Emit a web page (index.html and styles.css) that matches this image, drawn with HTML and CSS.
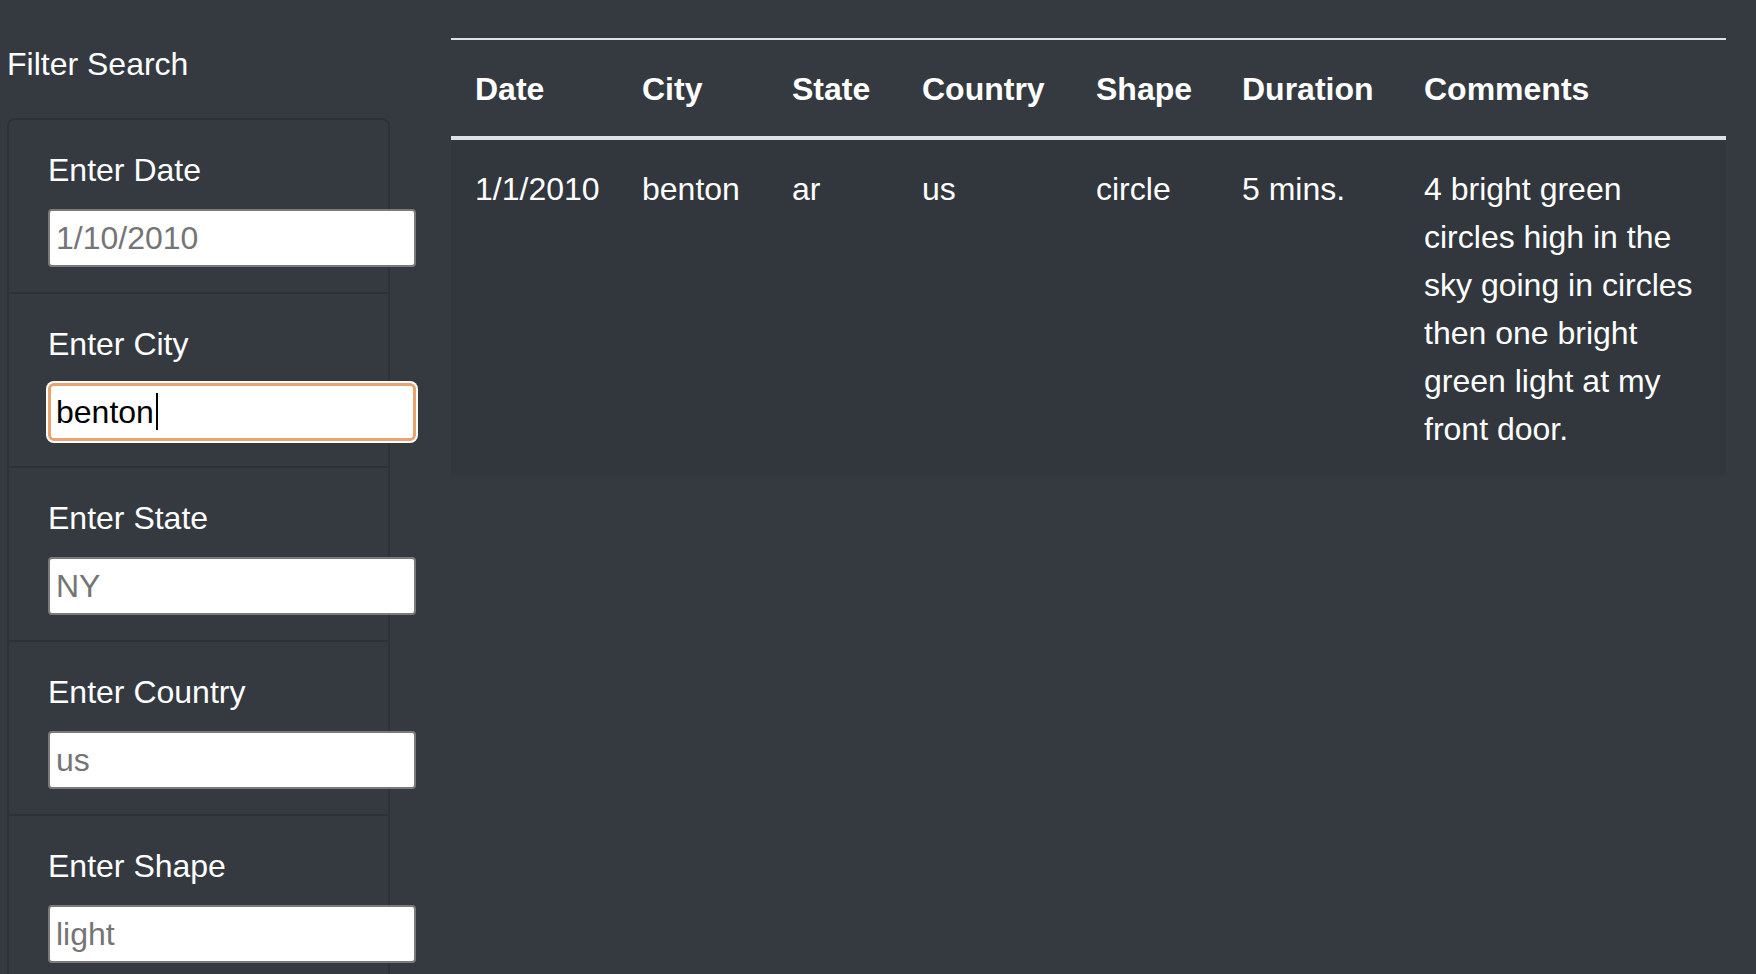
FILE: index.html
```html
<!DOCTYPE html>
<html lang="en">
<head>
<meta charset="utf-8">
<title>UFO Sightings</title>
<link rel="stylesheet" href="styles.css">
</head>
<body>
<div class="page">
  <aside class="sidebar">
    <h4 class="sidebar-title">Filter Search</h4>
    <ul class="filter-card">
      <li class="filter-item">
        <label class="filter-label" for="datetime">Enter Date</label>
        <div class="field"><input class="filter-input" id="datetime" type="text" placeholder="1/10/2010"></div>
      </li>
      <li class="filter-item">
        <label class="filter-label" for="city">Enter City</label>
        <div class="field"><input class="filter-input is-focused" id="city" type="text" value="benton"><span class="caret"></span></div>
      </li>
      <li class="filter-item">
        <label class="filter-label" for="state">Enter State</label>
        <div class="field"><input class="filter-input" id="state" type="text" placeholder="NY"></div>
      </li>
      <li class="filter-item">
        <label class="filter-label" for="country">Enter Country</label>
        <div class="field"><input class="filter-input" id="country" type="text" placeholder="us"></div>
      </li>
      <li class="filter-item">
        <label class="filter-label" for="shape">Enter Shape</label>
        <div class="field"><input class="filter-input" id="shape" type="text" placeholder="light"></div>
      </li>
    </ul>
  </aside>
  <main class="content">
    <table class="ufo-table">
      <colgroup>
        <col class="c-date"><col class="c-city"><col class="c-state"><col class="c-country"><col class="c-shape"><col class="c-duration"><col class="c-comments">
      </colgroup>
      <thead>
        <tr>
          <th>Date</th><th>City</th><th>State</th><th>Country</th><th>Shape</th><th>Duration</th><th>Comments</th>
        </tr>
      </thead>
      <tbody>
        <tr>
          <td>1/1/2010</td><td>benton</td><td>ar</td><td>us</td><td>circle</td><td>5 mins.</td><td>4 bright green circles high in the sky going in circles then one bright green light at my front door.</td>
        </tr>
      </tbody>
    </table>
  </main>
</div>
</body>
</html>
```

FILE: styles.css
```css
html, body {
  margin: 0;
  padding: 0;
  height: 100%;
  overflow: hidden;
  background: #343a40;
}

body {
  font-family: "Liberation Sans", Arial, sans-serif;
  font-size: 32px;
  line-height: 48px;
  color: #ffffff;
}

.page {
  display: flex;
  align-items: flex-start;
}

.sidebar {
  width: 383px;
  padding: 40px 0 0 7px;
  flex: 0 0 auto;
}

.sidebar-title {
  margin: 0 0 30px 0;
  font-size: 32px;
  font-weight: 400;
  line-height: 48px;
}

.filter-card {
  list-style: none;
  margin: 0;
  padding: 0;
  width: 383px;
  box-sizing: border-box;
  border: 2px solid rgba(0, 0, 0, 0.125);
  border-radius: 8px;
  background: #343a40;
}

.filter-item {
  padding: 25px 40px 25px 39px;
  border-bottom: 2px solid rgba(0, 0, 0, 0.125);
  display: flex;
  flex-direction: column;
  gap: 15px;
}

.filter-label {
  display: block;
  padding-top: 1px;
  line-height: 48px;
  color: #ffffff;
}

.field {
  position: relative;
  width: 368px;
  height: 58px;
}

.filter-input {
  display: block;
  width: 368px;
  height: 58px;
  box-sizing: border-box;
  margin: 0;
  padding: 0 6px;
  border: 2px solid #7a7a7a;
  border-radius: 4px;
  background: #ffffff;
  font-family: "Liberation Sans", Arial, sans-serif;
  font-size: 32px;
  color: #000000;
  outline: none;
}

.filter-input::placeholder {
  color: #757575;
  opacity: 1;
}

.filter-input.is-focused {
  border: 3px solid #e9a36f;
  border-radius: 6px;
  padding: 0 5px;
  box-shadow: 0 0 0 2px #ffffff;
}

.caret {
  position: absolute;
  left: 108px;
  top: 10px;
  width: 2px;
  height: 37px;
  background: #000000;
}

.content {
  margin-left: 61px;
  padding-top: 38px;
  flex: 0 0 auto;
}

.ufo-table {
  width: 1275px;
  table-layout: fixed;
  border-collapse: collapse;
  color: #ffffff;
}

.c-date { width: 167px; }
.c-city { width: 150px; }
.c-state { width: 130px; }
.c-country { width: 174px; }
.c-shape { width: 146px; }
.c-duration { width: 182px; }
.c-comments { width: 326px; }

.ufo-table th,
.ufo-table td {
  padding: 25px 24px 23px;
  text-align: left;
  vertical-align: top;
  line-height: 48px;
}

.ufo-table th {
  font-weight: 700;
  border-top: 2px solid #dee2e6;
  border-bottom: 4px solid #dee2e6;
}

.ufo-table tbody tr {
  background: rgba(0, 0, 0, 0.05);
}
```
